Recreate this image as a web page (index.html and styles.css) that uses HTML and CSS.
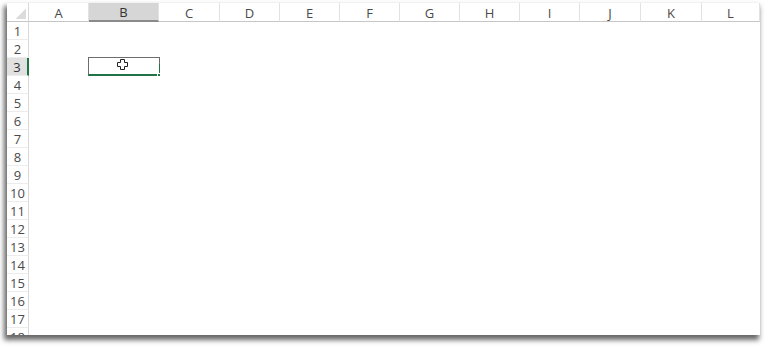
FILE: index.html
```html
<!DOCTYPE html>
<html lang="en">
<head>
  <meta charset="UTF-8">
  <title>Sheet</title>
  <link rel="stylesheet" href="styles.css">
</head>
<body>
  <main class="window">
    <div class="sheet">
      <div class="corner"></div>
      <div class="col-head">A</div>
      <div class="col-head active">B</div>
      <div class="col-head">C</div>
      <div class="col-head">D</div>
      <div class="col-head">E</div>
      <div class="col-head">F</div>
      <div class="col-head">G</div>
      <div class="col-head">H</div>
      <div class="col-head">I</div>
      <div class="col-head">J</div>
      <div class="col-head">K</div>
      <div class="col-head">L</div>

      <div class="row-head">1</div>
      <div class="row-head">2</div>
      <div class="row-head active">3</div>
      <div class="row-head">4</div>
      <div class="row-head">5</div>
      <div class="row-head">6</div>
      <div class="row-head">7</div>
      <div class="row-head">8</div>
      <div class="row-head">9</div>
      <div class="row-head">10</div>
      <div class="row-head">11</div>
      <div class="row-head">12</div>
      <div class="row-head">13</div>
      <div class="row-head">14</div>
      <div class="row-head">15</div>
      <div class="row-head">16</div>
      <div class="row-head">17</div>
      <div class="row-head">18</div>

      <div class="selection">
        <svg class="cursor" width="11" height="11" viewBox="0 0 11 11">
          <path d="M3.5 0.5h4v3h3v4h-3v3h-4v-3h-3v-4h3z" fill="#fff" stroke="#222" stroke-width="1"/>
        </svg>
        <span class="handle"></span>
      </div>
    </div>
  </main>
</body>
</html>
```

FILE: styles.css
```css
*, *::before, *::after {
  box-sizing: border-box;
  margin: 0;
  padding: 0;
}

body {
  font-family: 'Open Sans', 'Noto Sans', sans-serif;
  background: #fff;
  width: 768px;
  height: 347px;
  padding: 3px 8px 12px 7px;
  overflow: hidden;
}

.window {
  height: 332px;
  background: #fff;
  overflow: hidden;
  box-shadow: -2px 4px 5px 1px rgba(0, 0, 0, 0.6);
}

.sheet {
  display: grid;
  grid-template-columns: 22px 60px 70px 61px 60px 60px 60px 60px 60px 60px 61px 61px 1fr;
  grid-template-rows: 19px repeat(18, 18px);
  font-size: 13px;
  color: #4a4a4a;

  .corner {
    border-right: 1px solid #d8d8d8;
    border-bottom: 1px solid #c6c6c6;
    background: linear-gradient(135deg, transparent 55%, #dcdcdc 55%) no-repeat right 2px bottom 2px / 12px 12px;
  }

  .col-head {
    display: grid;
    place-content: center;
    border-right: 1px solid #e2e2e2;
    border-bottom: 1px solid #c6c6c6;
    line-height: 1;
    padding-top: 2px;

    &.active {
      background: #d6d6d6;
      border-bottom: 2px solid #8a8a8a;
      color: #333;
    }
  }

  .row-head {
    grid-column: 1;
    display: grid;
    place-content: center;
    border-right: 1px solid #d8d8d8;
    border-bottom: 1px solid #ececec;
    line-height: 1;
    padding-top: 1px;

    &.active {
      background: #e1e1e1;
      border-right: 2px solid #217346;
      color: #333;
    }
  }

  .selection {
    grid-column: 3;
    grid-row: 4;
    margin: -1px -1px 0 -1px;
    position: relative;
    border: 1px solid #6d6d6d;
    border-bottom: 2px solid #217346;
    display: flex;
    justify-content: center;
    padding-top: 1px;

    &::after {
      content: '';
      position: absolute;
      right: -1px;
      top: 6px;
      bottom: -2px;
      width: 1px;
      background: #217346;
    }

    .cursor {
      margin-left: -4px;
    }

    .handle {
      position: absolute;
      right: -2px;
      bottom: -3px;
      width: 4px;
      height: 4px;
      background: #217346;
      border: 1px solid #fff;
      z-index: 1;
    }
  }
}
```
